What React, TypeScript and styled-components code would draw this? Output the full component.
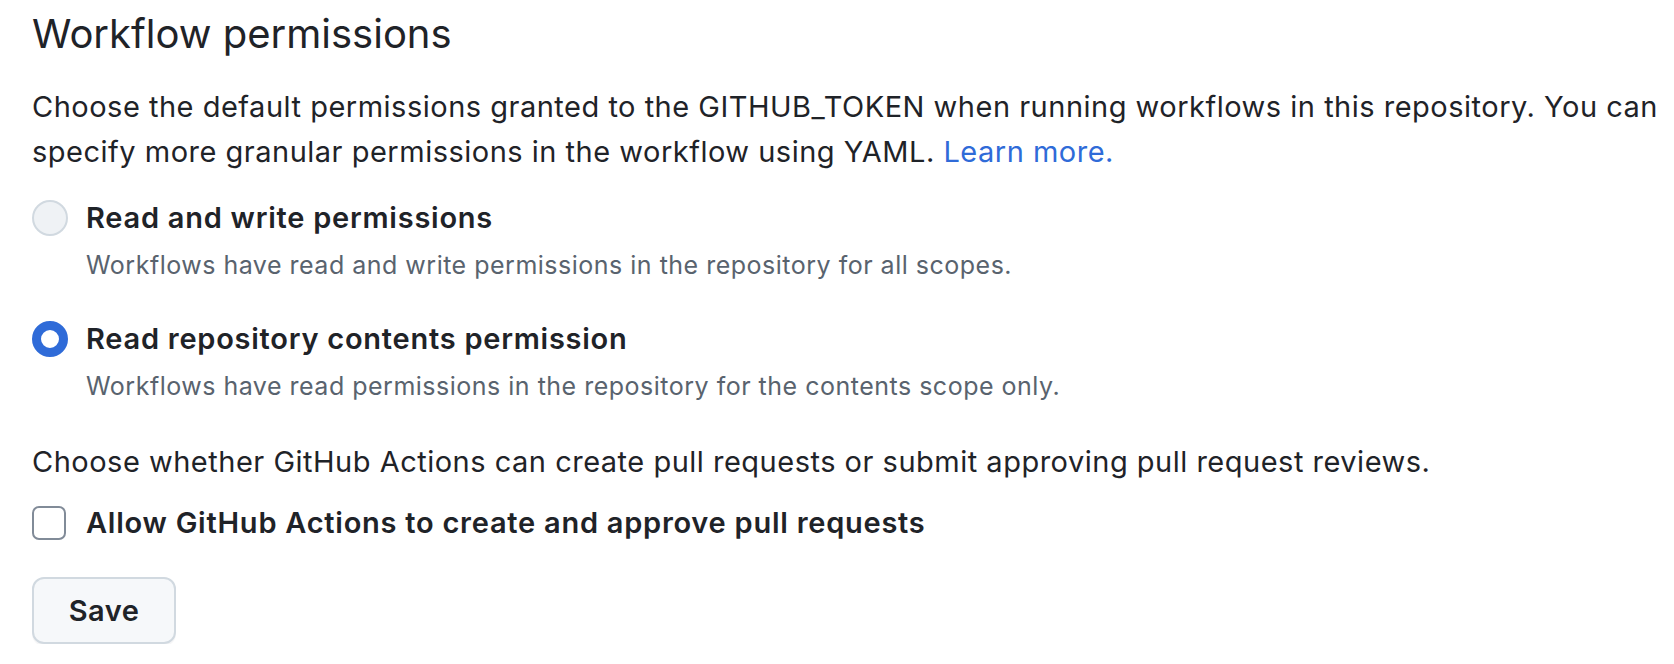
import React from 'react';
import styled, { createGlobalStyle } from 'styled-components';

const GlobalStyle = createGlobalStyle`
  body {
    margin: 0;
    background: #fff;
    color: #1f2328;
    font-family: Inter, "Noto Sans", "Liberation Sans", sans-serif;
    -webkit-font-smoothing: antialiased;
  }
`;

const Page = styled.main`
  padding: 4px 8px 0 32px;
`;

const Heading = styled.h2`
  margin: 0;
  font-size: 40px;
  line-height: 60px;
  font-weight: 400;
`;

const Paragraph = styled.p<{ $gap: number }>`
  margin: ${({ $gap }) => $gap}px 0 0;
  font-size: 29px;
  line-height: 45px;
  letter-spacing: 0.5px;
`;

const Link = styled.a`
  color: #2f6bd8;
  text-decoration: none;
`;

const Option = styled.label<{ $gap: number }>`
  display: grid;
  grid-template-columns: 36px 1fr;
  column-gap: 18px;
  margin-top: ${({ $gap }) => $gap}px;
  cursor: pointer;
`;

const Radio = styled.span<{ $checked?: boolean }>`
  box-sizing: border-box;
  width: 36px;
  height: 36px;
  margin-top: 4px;
  border-radius: 50%;
  background: ${({ $checked }) => ($checked ? '#fff' : '#eff2f5')};
  border: ${({ $checked }) => ($checked ? '9px solid #2f6bd8' : '2px solid #d1d9e0')};
`;

const Checkbox = styled.span`
  box-sizing: border-box;
  width: 34px;
  height: 34px;
  margin-top: 5px;
  border-radius: 7px;
  border: 2px solid #818b98;
  background: #fff;
`;

const LabelText = styled.span`
  font-size: 29px;
  line-height: 44px;
  font-weight: 600;
  letter-spacing: 0.75px;
`;

const Description = styled.span`
  grid-column: 2;
  margin-top: 7px;
  font-size: 25px;
  line-height: 36px;
  letter-spacing: 0.5px;
  color: #59636e;
`;

const Button = styled.button`
  display: block;
  box-sizing: border-box;
  margin-top: 32px;
  width: 144px;
  height: 67px;
  border: 2px solid #d1d9e0;
  border-radius: 12px;
  background: #f6f8fa;
  box-shadow: 0 2px 0 rgba(31, 35, 40, 0.04);
  color: #1f2328;
  font-family: inherit;
  font-size: 29px;
  font-weight: 600;
  letter-spacing: 0.5px;
  cursor: pointer;
`;

const App = () => (
  <>
    <GlobalStyle />
    <Page>
      <Heading>Workflow permissions</Heading>
      <Paragraph $gap={20}>
        Choose the default permissions granted to the GITHUB_TOKEN when running workflows in this repository. You can
        specify more granular permissions in the workflow using YAML. <Link href="#">Learn more.</Link>
      </Paragraph>

      <Option $gap={22}>
        <Radio />
        <LabelText>Read and write permissions</LabelText>
        <Description>Workflows have read and write permissions in the repository for all scopes.</Description>
      </Option>

      <Option $gap={34}>
        <Radio $checked />
        <LabelText>Read repository contents permission</LabelText>
        <Description>Workflows have read permissions in the repository for the contents scope only.</Description>
      </Option>

      <Paragraph $gap={35}>
        Choose whether GitHub Actions can create pull requests or submit approving pull request reviews.
      </Paragraph>

      <Option $gap={17}>
        <Checkbox />
        <LabelText>Allow GitHub Actions to create and approve pull requests</LabelText>
      </Option>

      <Button>Save</Button>
    </Page>
  </>
);

export default App;
